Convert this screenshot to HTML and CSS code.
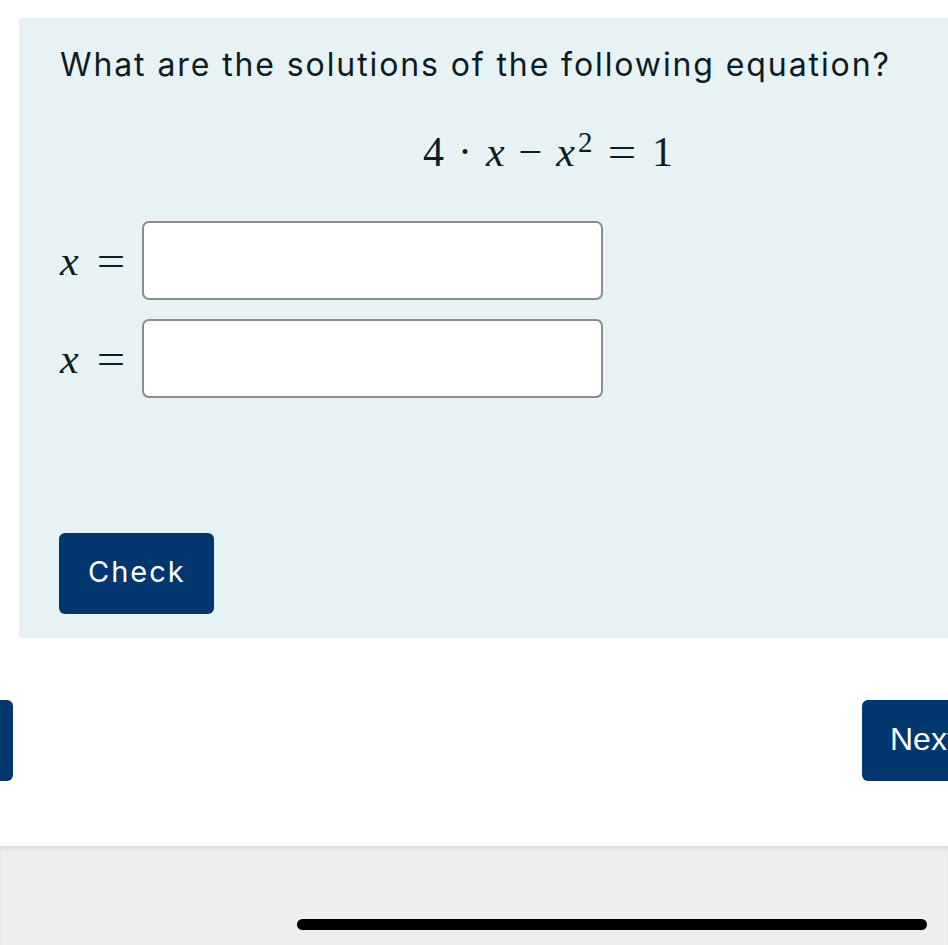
FILE: index.html
```html
<!DOCTYPE html>
<html lang="en">
<head>
    <meta charset="UTF-8">
    <meta name="viewport" content="width=device-width, initial-scale=1.0">
    <title>Exercise</title>
    <link rel="stylesheet" href="styles.css">
</head>
<body>
    <div class="page">
        <div class="exercise">
            <h2 class="question">What are the solutions of the following equation?</h2>

            <div class="equation">
                <span class="num">4</span>
                <span class="op">&middot;</span>
                <span class="var">x</span>
                <span class="op">&minus;</span>
                <span class="var">x</span><sup class="sup">2</sup>
                <span class="rel">=</span>
                <span class="num">1</span>
            </div>

            <div class="answers">
                <div class="answer-row">
                    <span class="lhs"><span class="var">x</span><span class="rel">=</span></span>
                    <input type="text" class="answer-input">
                </div>
                <div class="answer-row">
                    <span class="lhs"><span class="var">x</span><span class="rel">=</span></span>
                    <input type="text" class="answer-input">
                </div>
            </div>

            <button class="check-btn">Check</button>
        </div>

        <div class="nav-row">
            <button class="nav-btn prev">Previous</button>
            <button class="nav-btn">Next</button>
        </div>
    </div>

    <div class="bottom-bar">
        <div class="home-indicator"></div>
    </div>
</body>
</html>
```

FILE: styles.css
```css
* {
    margin: 0;
    padding: 0;
    box-sizing: border-box;
}

html, body {
    width: 948px;
    height: 945px;
    overflow: hidden;
    background: #fff;
}

body {
    font-family: 'Inter', 'Noto Sans', sans-serif;
    color: #0c1c22;
}

.page {
    height: 846px;
    padding: 18px 0 0 19px;
}

.exercise {
    width: 1058px;
    background: #e7f2f5;
    border-radius: 4px;
    padding: 27px 41px 24px 41px;
}

.question {
    font-size: 32px;
    font-weight: 400;
    line-height: 40px;
    letter-spacing: 1.9px;
}

.equation {
    display: flex;
    justify-content: center;
    align-items: baseline;
    margin-top: 42px;
    font-family: 'Liberation Serif', 'DejaVu Serif', serif;
    font-size: 42px;
    line-height: 50px;
}

.var {
    font-style: italic;
}

.op {
    margin: 0 14px;
}

.rel {
    display: inline-block;
    margin: 0 18px;
    transform: scaleX(1.2);
}

.sup {
    font-size: 29px;
    position: relative;
    top: -14px;
    margin-left: 3px;
}

.answers {
    display: flex;
    flex-direction: column;
    gap: 19px;
    margin-top: 40px;
}

.answer-row {
    display: flex;
    align-items: center;
}

.lhs {
    width: 82px;
    font-family: 'Liberation Serif', 'DejaVu Serif', serif;
    font-size: 42px;
}

.lhs .rel {
    margin: 0 0 0 20px;
}

.answer-input {
    width: 461px;
    height: 79px;
    border: 2px solid #8c8c8c;
    border-radius: 7px;
    background: #fff;
    font-size: 24px;
    padding: 0 12px;
    outline: none;
}

.check-btn {
    display: block;
    margin-top: 135px;
    margin-left: -1px;
    background: #03376f;
    color: #fff;
    border: none;
    border-radius: 6px;
    font-family: 'Inter', 'Noto Sans', sans-serif;
    font-size: 29px;
    padding: 0 28px 4px 29px;
    height: 81px;
    letter-spacing: 2px;
}

.nav-row {
    display: flex;
    justify-content: space-between;
    width: 1175px;
    margin: 62px 0 0 -169px;
}

.nav-btn {
    background: #03376f;
    color: #fff;
    border: none;
    border-radius: 6px;
    font-family: 'Liberation Sans', Arial, sans-serif;
    font-size: 32px;
    height: 81px;
    width: 163px;
    padding: 0 28px 2px;
    text-align: left;
    white-space: nowrap;
    overflow: hidden;
}

.nav-btn.prev {
    padding-left: 8px;
}

.bottom-bar {
    height: 99px;
    background: #eeeeee;
    box-shadow: inset 0 4px 5px -2px rgba(0,0,0,0.1);
    padding: 73px 0 0 297px;
}

.home-indicator {
    width: 630px;
    height: 11px;
    background: #000;
    border-radius: 6px;
}
```
